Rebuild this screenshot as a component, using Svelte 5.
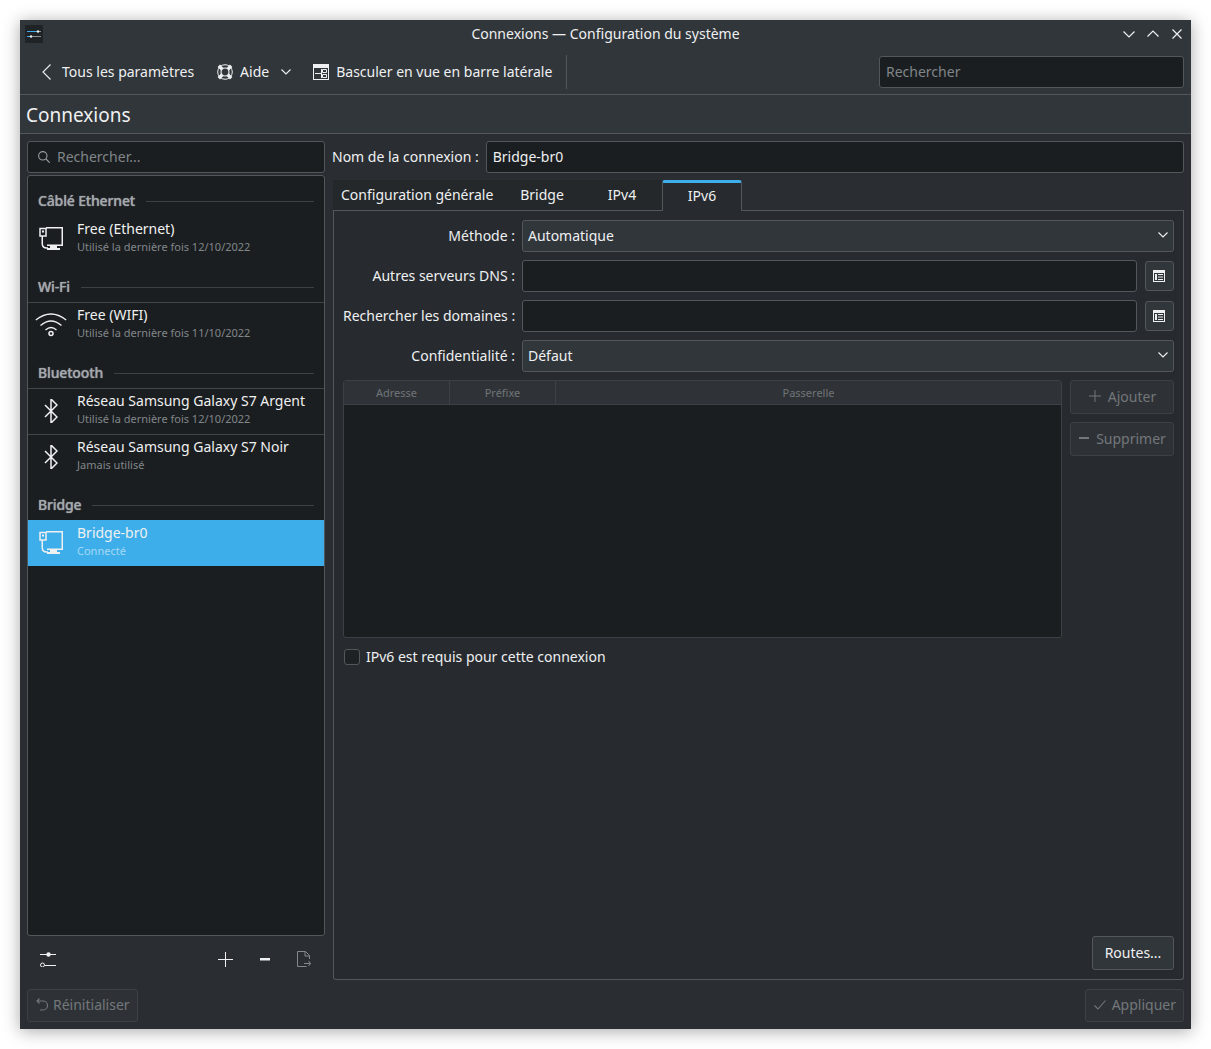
<script>
	const sections = [
		{
			name: "Câblé Ethernet",
			items: [{ name: "Free (Ethernet)", sub: "Utilisé la dernière fois 12/10/2022", icon: "wired" }]
		},
		{
			name: "Wi-Fi",
			items: [{ name: "Free (WIFI)", sub: "Utilisé la dernière fois 11/10/2022", icon: "wifi", line: true }]
		},
		{
			name: "Bluetooth",
			items: [
				{ name: "Réseau Samsung Galaxy S7 Argent", sub: "Utilisé la dernière fois 12/10/2022", icon: "bt", line: true },
				{ name: "Réseau Samsung Galaxy S7 Noir", sub: "Jamais utilisé", icon: "bt", line: true }
			]
		},
		{
			name: "Bridge",
			items: [{ name: "Bridge-br0", sub: "Connecté", icon: "wired", selected: true }]
		}
	];
</script>

<div class="window">
	<header class="titlebar">
		<svg class="app-icon" viewBox="0 0 18 18" aria-hidden="true">
			<rect width="18" height="18" rx="1" fill="#1f2326" />
			<path d="M2 6.500h14M2 11.500h14" stroke="#8a9094" stroke-width="1" />
			<path d="M2 6.500h12M2 11.500h5" stroke="#3daee9" stroke-width="1" />
			<circle cx="13" cy="6.500" r="1.200" fill="#eff0f1" />
			<circle cx="6" cy="11.500" r="1.200" fill="#eff0f1" />
		</svg>
		<span class="title">Connexions — Configuration du système</span>
		<div class="win-buttons">
			<svg viewBox="0 0 12 12" aria-hidden="true"><path d="M.5 3.500 6 9l5.500-5.500" /></svg>
			<svg viewBox="0 0 12 12" aria-hidden="true"><path d="M.5 8.500 6 3l5.500 5.500" /></svg>
			<svg viewBox="0 0 12 12" aria-hidden="true"><path d="m1.500 1.500 9 9M10.500 1.500l-9 9" /></svg>
		</div>
	</header>

	<div class="toolbar">
		<button class="tool back">
			<svg class="line-icon" width="10" height="16" viewBox="0 0 10 16" aria-hidden="true"><path d="M8.500.5 1 8l7.500 7.500" /></svg>
			Tous les paramètres
		</button>
		<button class="tool help">
			<svg width="16" height="16" viewBox="0 0 16 16" aria-hidden="true">
				<circle cx="8" cy="8" r="7.300" fill="none" stroke="#eff0f1" stroke-width="1" />
				<circle cx="8" cy="8" r="4" fill="none" stroke="#eff0f1" stroke-width="1.200" />
				<path d="m1.800 1.800 3.400 3.400M14.200 1.800l-3.400 3.400M1.800 14.200l3.400-3.400M14.200 14.200l-3.400-3.400" stroke="#eff0f1" stroke-width="3.400" />
			</svg>
			Aide
			<svg class="line-icon chev" width="10" height="6" viewBox="0 0 10 6" aria-hidden="true"><path d="M.5.500 5 5 9.500.500" /></svg>
		</button>
		<button class="tool sidebar">
			<svg width="16" height="16" viewBox="0 0 16 16" aria-hidden="true">
				<path d="M0 0h16v16H0Zm1 4v11h14V4Z" fill="#eff0f1" fill-rule="evenodd" />
				<path d="M2 9h6v1H2ZM8 5h1v9H8Z" fill="#eff0f1" />
				<path d="M9.500 5.500h4v3h-4ZM9.500 10.500h4v3h-4Z" fill="none" stroke="#eff0f1" stroke-width="1" />
			</svg>
			Basculer en vue en barre latérale
		</button>
		<span class="tool-sep"></span>
		<input class="tool-search field" placeholder="Rechercher" />
	</div>

	<div class="pagehead">Connexions</div>

	<div class="content">
		<aside class="left">
			<div class="search field">
				<svg class="line-icon muted" width="12" height="12" viewBox="0 0 12 12" aria-hidden="true"><circle cx="4.800" cy="4.800" r="4.200" /><path d="m8 8 3.700 3.700" /></svg>
				<span>Rechercher...</span>
			</div>
			<div class="list">
				{#each sections as section}
					<div class="section-head">
						<span>{section.name}</span>
						<i></i>
					</div>
					{#each section.items as item}
						<div class="item" class:selected={item.selected} class:line={item.line}>
							<div class="item-icon">
								{#if item.icon === "wired"}
									<svg width="24" height="24" viewBox="0 0 24 24" aria-hidden="true">
										<path d="M7 .75h16.250v17.500H8" fill="none" stroke="currentColor" stroke-width="1.500" />
										<rect x="1" y="1.500" width="6" height="7.500" fill="none" stroke="currentColor" stroke-width="1.500" />
										<rect x="3" y="3.500" width="2" height="2" fill="currentColor" />
										<path d="M3.250 9v7.500q0 4.500 4.500 4.500H9" fill="none" stroke="currentColor" stroke-width="1.500" />
										<path d="M11 18h7v3h3v2H8v-2h3Z" fill="currentColor" />
									</svg>
								{:else if item.icon === "wifi"}
									<svg class="wifi" width="32" height="24" viewBox="0 0 32 24" aria-hidden="true">
										<path d="M.8 7Q16-5 31.200 7M5.500 12.500Q16 3.500 26.500 12.500M10.500 17Q16 12 21.500 17" fill="none" stroke="currentColor" stroke-width="1.300" />
										<circle cx="16" cy="20.500" r="2" fill="none" stroke="currentColor" stroke-width="1.500" />
									</svg>
								{:else}
									<svg class="bt" width="14" height="24" viewBox="0 0 14 24" aria-hidden="true">
										<path d="m1 6 12 12-6 6V0l6 6L1 18" fill="none" stroke="currentColor" stroke-width="1.500" />
									</svg>
								{/if}
							</div>
							<div class="item-text">
								<div class="item-name">{item.name}</div>
								<div class="item-sub">{item.sub}</div>
							</div>
						</div>
					{/each}
				{/each}
			</div>
			<div class="list-tools">
				<svg width="16" height="16" viewBox="0 0 16 16" aria-hidden="true">
					<path d="M0 3.500h16M5 14.500h11" stroke="#eff0f1" stroke-width="1" />
					<circle cx="8.500" cy="3.500" r="2.200" fill="#eff0f1" />
					<circle cx="2.500" cy="14" r="2" fill="#2a2e32" stroke="#eff0f1" stroke-width="1" />
				</svg>
				<div class="list-tools-right">
					<svg width="15" height="16" viewBox="0 0 15 16" aria-hidden="true"><path d="M0 8.500h15M7.500 1v15" stroke="#eff0f1" stroke-width="1" /></svg>
					<svg width="10" height="16" viewBox="0 0 10 16" aria-hidden="true"><path d="M0 7h10v2.500H0Z" fill="#eff0f1" /></svg>
					<svg width="14" height="16" viewBox="0 0 14 16" aria-hidden="true"><path d="M12.500 8V4.500L8.500.5h-8v15h9M8 .5v4.500h4.500M7 12.500h6.500M11.500 10l2 2.500-2 2.500" fill="none" stroke="#85898c" stroke-width="1" /></svg>
				</div>
			</div>
		</aside>

		<main class="right">
			<div class="name-row">
				<label for="conn-name">Nom de la connexion :</label>
				<input id="conn-name" class="field" value="Bridge-br0" />
			</div>

			<div class="tabs">
				<div class="tab first">Configuration générale</div>
				<div class="tab">Bridge</div>
				<div class="tab">IPv4</div>
				<div class="tab active">IPv6</div>
				<div class="tabs-rest"></div>
			</div>

			<div class="panel">
				<div class="form">
					<span class="form-label">Méthode :</span>
					<div class="combo">Automatique<svg class="line-icon" width="10" height="6" viewBox="0 0 10 6" aria-hidden="true"><path d="M.5.500 5 5 9.500.500" /></svg></div>

					<span class="form-label">Autres serveurs DNS :</span>
					<div class="with-button">
						<div class="field box"></div>
						<button class="square" aria-label="Liste">
							<svg width="12" height="12" viewBox="0 0 12 12" aria-hidden="true"><path d="M0 0h12v12H0Zm1 3v8h10V3Z" fill="#eff0f1" fill-rule="evenodd" /><path d="M2 4h2v6H2ZM5 4h5v1H5ZM5 6.500h5v1H5ZM5 9h5v1H5Z" fill="#eff0f1" /></svg>
						</button>
					</div>

					<span class="form-label">Rechercher les domaines :</span>
					<div class="with-button">
						<div class="field box"></div>
						<button class="square" aria-label="Liste">
							<svg width="12" height="12" viewBox="0 0 12 12" aria-hidden="true"><path d="M0 0h12v12H0Zm1 3v8h10V3Z" fill="#eff0f1" fill-rule="evenodd" /><path d="M2 4h2v6H2ZM5 4h5v1H5ZM5 6.500h5v1H5ZM5 9h5v1H5Z" fill="#eff0f1" /></svg>
						</button>
					</div>

					<span class="form-label">Confidentialité :</span>
					<div class="combo">Défaut<svg class="line-icon" width="10" height="6" viewBox="0 0 10 6" aria-hidden="true"><path d="M.5.500 5 5 9.500.500" /></svg></div>
				</div>

				<div class="table-row">
					<div class="table">
						<div class="thead">
							<span class="col">Adresse</span>
							<span class="col">Préfixe</span>
							<span class="col grow">Passerelle</span>
						</div>
					</div>
					<div class="table-buttons">
						<button class="btn disabled shifted">
							<svg width="12" height="12" viewBox="0 0 12 12" aria-hidden="true"><path d="M0 6h12M6 0v12" stroke="#73777b" stroke-width="1" /></svg>
							Ajouter
						</button>
						<button class="btn disabled shifted">
							<svg width="10" height="12" viewBox="0 0 10 12" aria-hidden="true"><path d="M0 5h10v2H0Z" fill="#73777b" /></svg>
							Supprimer
						</button>
					</div>
				</div>

				<div class="check-row">
					<span class="checkbox"></span>
					IPv6 est requis pour cette connexion
				</div>

				<div class="panel-foot">
					<button class="btn routes">Routes...</button>
				</div>
			</div>
		</main>
	</div>

	<footer class="footer">
		<button class="btn disabled reset">
			<svg class="line-icon dim" width="12" height="13" viewBox="0 0 12 13" aria-hidden="true"><path d="M3.500.5 1 3l2.500 2.500M1 3h6a4.500 4.500 0 0 1 0 9H4" /></svg>
			Réinitialiser
		</button>
		<button class="btn disabled">
			<svg class="line-icon dim" width="12" height="10" viewBox="0 0 12 10" aria-hidden="true"><path d="m.5 5.500 3.500 3.500 7.500-8.500" /></svg>
			Appliquer
		</button>
	</footer>
</div>

<style>
	:global(html),
	:global(body) {
		margin: 0;
		background: #fff;
	}

	* {
		box-sizing: border-box;
	}

	.window {
		display: flex;
		flex-direction: column;
		width: 1171px;
		height: 1009px;
		margin: 20px;
		background: #2a2e32;
		color: #eff0f1;
		font-family: "Noto Sans", sans-serif;
		font-size: 14px;
		box-shadow: 0 2px 16px rgba(0, 0, 0, 0.35);
	}

	.titlebar {
		position: relative;
		display: flex;
		flex: none;
		align-items: center;
		justify-content: space-between;
		height: 28px;
		padding: 0 8px 0 5px;
		background: #31363b;
	}

	.app-icon {
		width: 18px;
		height: 18px;
	}

	.title {
		position: absolute;
		left: 0;
		right: 0;
		padding-bottom: 2px;
		text-align: center;
	}

	.win-buttons {
		position: relative;
		display: flex;
		gap: 12px;
	}

	.win-buttons svg {
		width: 12px;
		height: 12px;
		fill: none;
		stroke: #eff0f1;
		stroke-width: 1.200;
	}

	.line-icon {
		flex: none;
		fill: none;
		stroke: #eff0f1;
		stroke-width: 1.100;
	}

	.line-icon.muted {
		stroke: #9a9ea2;
	}

	.line-icon.dim {
		stroke: #73777b;
	}

	.toolbar {
		display: flex;
		flex: none;
		align-items: center;
		height: 47px;
		padding: 7px 7px 6px 22px;
		background: #31363b;
		border-bottom: 1px solid #53575b;
	}

	button {
		font: inherit;
		color: inherit;
		background: none;
		border: 0;
		padding: 0;
	}

	.tool {
		display: flex;
		align-items: center;
		height: 33px;
	}

	.back {
		gap: 10px;
	}

	.help {
		gap: 7px;
		margin-left: 23px;
	}

	.chev {
		margin-left: 5px;
	}

	.sidebar {
		gap: 7px;
		margin-left: 22px;
	}

	.tool-sep {
		width: 1px;
		height: 34px;
		margin-left: 14px;
		background: #53575b;
	}

	.field {
		background: #1b1e20;
		border: 1px solid #53575b;
		border-radius: 3px;
		color: #eff0f1;
		font: inherit;
		outline: none;
	}

	input::placeholder {
		color: #7f8589;
		opacity: 1;
	}

	.tool-search {
		width: 305px;
		height: 32px;
		margin-left: auto;
		padding: 0 6px;
	}

	.pagehead {
		display: flex;
		flex: none;
		align-items: center;
		height: 39px;
		padding: 1px 0 0 6px;
		background: #31363b;
		border-bottom: 1px solid #53575b;
		font-size: 19px;
	}

	.content {
		display: flex;
		flex: 1;
		gap: 7px;
		min-height: 0;
		padding: 7px 7px 0;
	}

	.left {
		display: flex;
		flex: none;
		flex-direction: column;
		width: 298px;
	}

	.search {
		display: flex;
		flex: none;
		align-items: center;
		gap: 7px;
		height: 32px;
		padding: 0 0 2px 10px;
		color: #7f8589;
	}

	.search svg {
		margin-top: 2px;
	}

	.list {
		flex: 1;
		margin-top: 2px;
		background: #1b1e20;
		border: 1px solid #53575b;
		border-radius: 3px;
	}

	.section-head {
		display: flex;
		align-items: flex-end;
		gap: 11px;
		height: 40px;
		padding: 0 10px 6px;
		color: #a3a8ac;
		font-weight: 500;
		letter-spacing: -0.15px;
		text-shadow: 0 0 1px #a3a8ac;
	}

	.section-head span {
		line-height: 18px;
	}

	.section-head i {
		flex: 1;
		height: 1px;
		margin-bottom: 8px;
		background: #3d4145;
	}

	.item {
		display: flex;
		height: 46px;
	}

	.item.line {
		border-top: 1px solid #43474b;
	}

	.item.selected {
		background: #3daee9;
	}

	.item-icon {
		display: flex;
		flex: none;
		justify-content: center;
		width: 46px;
		padding-top: 11px;
	}

	.item.line .item-icon {
		padding-top: 10px;
	}

	.item-text {
		padding: 3px 0 0 3px;
		white-space: nowrap;
	}

	.item.line .item-text {
		padding-top: 2px;
	}

	.item-name {
		line-height: 20px;
	}

	.item-sub {
		color: #80868a;
		font-size: 11px;
		line-height: 16px;
	}

	.selected .item-sub {
		color: #a4d9f5;
	}

	.list-tools {
		display: flex;
		flex: none;
		align-items: center;
		justify-content: space-between;
		height: 44px;
		padding: 2px 14px 0 13px;
	}

	.list-tools-right {
		display: flex;
		align-items: center;
		gap: 27px;
	}

	.right {
		display: flex;
		flex: 1;
		flex-direction: column;
		min-width: 0;
	}

	.name-row {
		display: flex;
		flex: none;
		align-items: center;
		gap: 7px;
	}

	.name-row label {
		padding-bottom: 2px;
		white-space: nowrap;
	}

	.name-row input {
		flex: 1;
		height: 32px;
		padding: 0 6px 2px;
	}

	.tabs {
		display: flex;
		flex: none;
		height: 31px;
		margin: 7px 0 0 1px;
	}

	.tab {
		display: flex;
		align-items: center;
		justify-content: center;
		width: 80px;
		padding-bottom: 1px;
		background: #24282b;
		border-bottom: 1px solid #53575b;
	}

	.tab.first {
		width: 169px;
		justify-content: flex-start;
		padding-left: 8px;
	}

	.tab.active {
		padding-bottom: 4px;
		background: #272b2f;
		border: 1px solid #53575b;
		border-top: 3px solid #3daee9;
		border-bottom: 0;
		border-radius: 3px 3px 0 0;
	}

	.tabs-rest {
		flex: 1;
		border-bottom: 1px solid #53575b;
	}

	.panel {
		display: flex;
		flex: 1;
		flex-direction: column;
		min-height: 0;
		margin-left: 1px;
		padding: 9px;
		background: #272b2f;
		border: 1px solid #53575b;
		border-top: 0;
		border-radius: 0 0 3px 3px;
	}

	.form {
		display: grid;
		flex: none;
		grid-template-columns: 172px 1fr;
		grid-auto-rows: 32px;
		column-gap: 7px;
		row-gap: 8px;
	}

	.form-label {
		align-self: center;
		padding-bottom: 2px;
		text-align: right;
		white-space: nowrap;
	}

	.combo {
		display: flex;
		align-items: center;
		justify-content: space-between;
		padding: 0 5px 2px 5px;
		background: #31363b;
		border: 1px solid #53575b;
		border-radius: 3px;
	}

	.with-button {
		display: flex;
		gap: 8px;
	}

	.box {
		flex: 1;
	}

	.square {
		display: flex;
		flex: none;
		align-items: center;
		justify-content: center;
		width: 29px;
		height: 30px;
		margin-top: 1px;
		padding-right: 1px;
		background: #31363b;
		border: 1px solid #53575b;
		border-radius: 3px;
	}

	.table-row {
		display: flex;
		flex: none;
		gap: 8px;
		height: 258px;
		margin-top: 8px;
	}

	.table {
		flex: 1;
		background: #1b1e20;
		border: 1px solid #3d4145;
		border-radius: 3px;
		overflow: hidden;
	}

	.thead {
		display: flex;
		height: 24px;
		background: #2f3337;
		border-bottom: 1px solid #3d4145;
		color: #6f7478;
		font-size: 11px;
	}

	.col {
		display: flex;
		align-items: center;
		justify-content: center;
		width: 106px;
		border-right: 1px solid #3d4145;
	}

	.col.grow {
		flex: 1;
		border-right: 0;
	}

	.table-buttons {
		display: flex;
		flex: none;
		flex-direction: column;
		gap: 8px;
		width: 104px;
	}

	.btn {
		display: flex;
		align-items: center;
		justify-content: center;
		gap: 6px;
		height: 34px;
		padding: 0 7px 2px;
		background: #31363b;
		border: 1px solid #53575b;
		border-radius: 3px;
		white-space: nowrap;
	}

	.btn.shifted {
		gap: 7px;
		padding-left: 8px;
		padding-right: 7px;
	}

	.btn.disabled {
		background: #2e3236;
		border-color: #3d4145;
		color: #73777b;
	}

	.check-row {
		display: flex;
		flex: none;
		align-items: center;
		gap: 6px;
		height: 20px;
		margin-top: 8px;
		margin-left: 1px;
	}

	.checkbox {
		width: 16px;
		height: 16px;
		margin-top: 1px;
		background: #1f2225;
		border: 1px solid #53575b;
		border-radius: 3px;
	}

	.panel-foot {
		display: flex;
		flex: 1;
		align-items: flex-end;
		justify-content: flex-end;
	}

	.routes {
		width: 82px;
	}

	.footer {
		display: flex;
		flex: none;
		align-items: center;
		justify-content: space-between;
		height: 49px;
		padding: 9px 7px 7px;
	}

	.footer .btn {
		height: 33px;
		padding: 0 7px 2px 8px;
	}

	.footer .reset {
		gap: 5px;
	}
</style>
